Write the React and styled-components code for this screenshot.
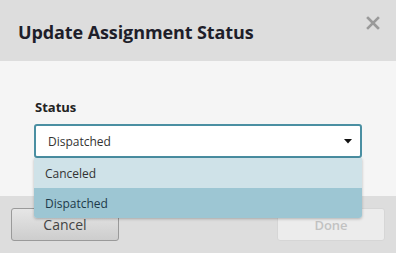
import React from "react";
import styled, { createGlobalStyle } from "styled-components";

const Global = createGlobalStyle`
  html, body { margin: 0; padding: 0; width: 396px; height: 253px; overflow: hidden; }
  body { font-family: "Open Sans", "Noto Sans", sans-serif; }
  * { box-sizing: border-box; }
`;

const Modal = styled.div`
  width: 396px;
  height: 253px;
  display: flex;
  flex-direction: column;
  background: #f5f5f5;
`;

const Header = styled.div`
  height: 61px;
  flex: none;
  background: #dddddd;
  display: flex;
  align-items: center;
  justify-content: space-between;
  padding: 0 0 0 18px;
  position: relative;
`;

const Title = styled.h1`
  margin: 0;
  margin-top: 2px;
  font-size: 18px;
  font-weight: 700;
  color: #1e1e2a;
  letter-spacing: -0.1px;
`;

const Close = styled.button`
  position: absolute;
  top: 14px;
  right: 14px;
  width: 18px;
  height: 18px;
  padding: 0;
  border: none;
  background: none;
  display: flex;
  align-items: center;
  justify-content: center;
`;

const Body = styled.div`
  flex: 1;
  padding: 37px 34px 0 34px;
  position: relative;
`;

const Label = styled.div`
  font-size: 13px;
  font-weight: 700;
  color: #222;
  margin: 0 0 8px 1px;
  line-height: 18px;
`;

const SelectWrap = styled.div`
  position: relative;
  width: 328px;
`;

const SelectBox = styled.div`
  height: 34px;
  border: 2px solid #4a8fa2;
  border-radius: 3px;
  background: #fff;
  display: flex;
  align-items: center;
  justify-content: space-between;
  padding: 0 8px 0 12px;
  font-size: 12px;
  color: #333;
`;

const Menu = styled.ul`
  position: absolute;
  left: 0;
  top: 34px;
  width: 328px;
  margin: 0;
  padding: 0;
  list-style: none;
  box-shadow: 0 1px 3px rgba(0, 0, 0, 0.25);
  border-radius: 0 0 3px 3px;
  overflow: hidden;
  z-index: 2;
`;

const Option = styled.li`
  height: 30px;
  display: flex;
  align-items: center;
  padding-left: 11px;
  font-size: 12px;
  color: ${(p) => (p.$selected ? "#1d3a4a" : "#333")};
  background: ${(p) => (p.$selected ? "#9dc6d3" : "#cfe2e8")};
`;

const Footer = styled.div`
  height: 57px;
  flex: none;
  background: #dddddd;
  display: flex;
  justify-content: space-between;
  padding: 12px 11px 0 11px;
`;

const Button = styled.button`
  width: 108px;
  height: 33px;
  border-radius: 3px;
  font-family: "Open Sans", "Noto Sans", sans-serif;
  font-size: ${(p) => (p.disabled ? "13px" : "14px")};
  padding: 0;
  border: 1px solid ${(p) => (p.disabled ? "#d6d6d6" : "#9a9a9a")};
  background: ${(p) =>
    p.disabled ? "#ececec" : "linear-gradient(#e6e6e6, #cdcdcd)"};
  color: ${(p) => (p.disabled ? "#c2c2c2" : "#444")};
  font-weight: ${(p) => (p.disabled ? 600 : 400)};
`;

export default function App() {
  return (
    <>
      <Global />
      <Modal>
        <Header>
          <Title>Update Assignment Status</Title>
          <Close aria-label="Close">
            <svg width="14" height="14" viewBox="0 0 14 14">
              <path d="M2 2 L12 12 M12 2 L2 12" stroke="#9a9a9a" strokeWidth="2.6" strokeLinecap="square" />
            </svg>
          </Close>
        </Header>
        <Body>
          <Label>Status</Label>
          <SelectWrap>
            <SelectBox>
              <span>Dispatched</span>
              <svg width="8" height="5" viewBox="0 0 8 5">
                <path d="M0 0 L8 0 L4 4.5 Z" fill="#111" />
              </svg>
            </SelectBox>
            <Menu>
              <Option>Canceled</Option>
              <Option $selected>Dispatched</Option>
            </Menu>
          </SelectWrap>
        </Body>
        <Footer>
          <Button>Cancel</Button>
          <Button disabled>Done</Button>
        </Footer>
      </Modal>
    </>
  );
}
